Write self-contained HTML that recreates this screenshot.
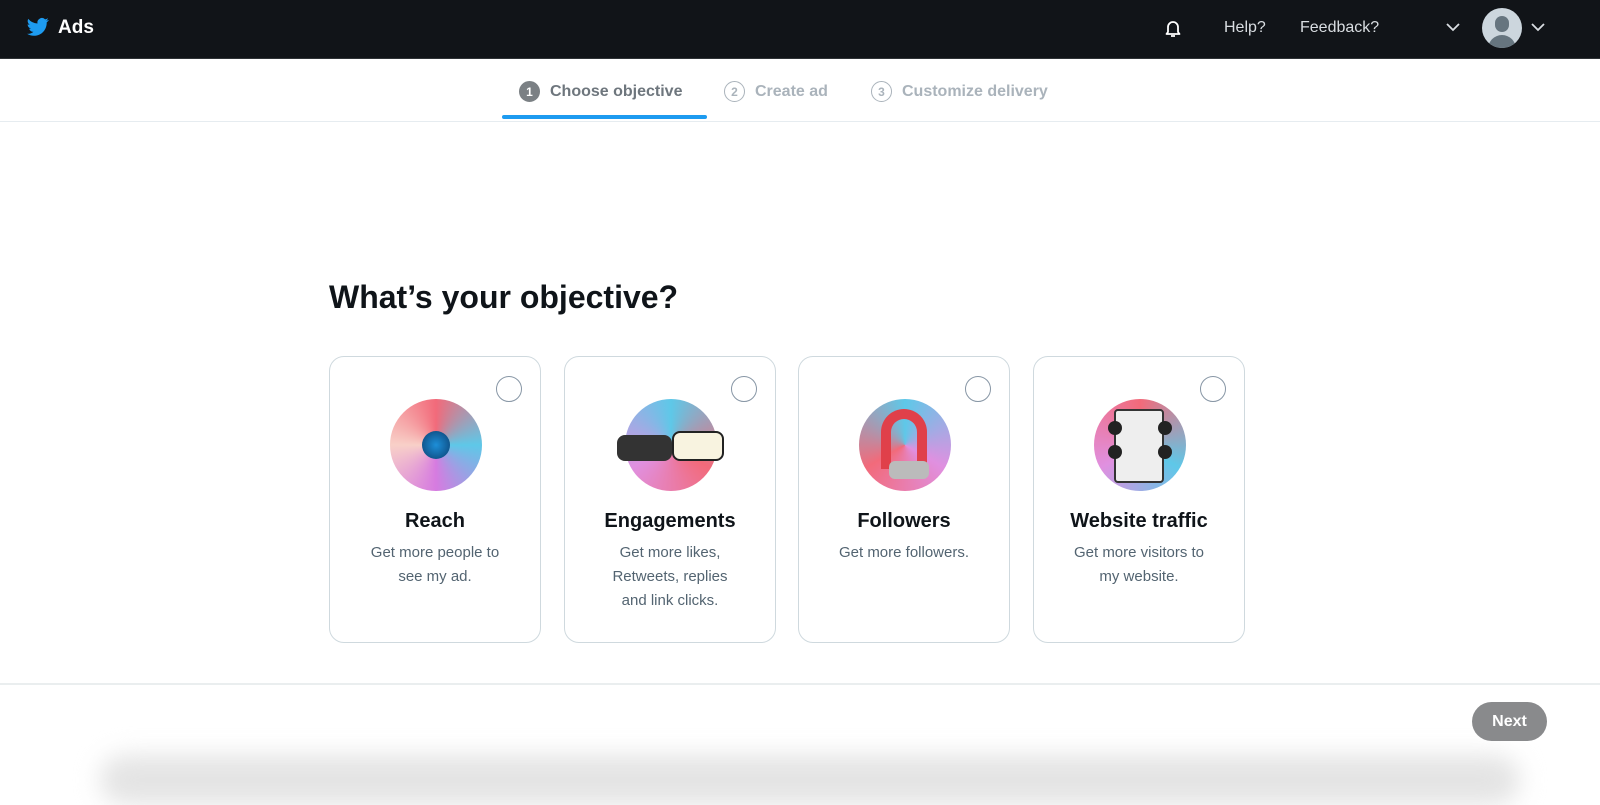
<!DOCTYPE html>
<html><head><style>
*{margin:0;padding:0;box-sizing:border-box}
body{width:1600px;height:772px;overflow:hidden;background:#fff;font-family:"Liberation Sans",sans-serif;position:relative}
.top{position:absolute;left:0;top:0;width:1600px;height:59px;background:#111418;border-bottom:1px solid #2f3336}
.t{position:absolute;color:#d9dde1;font-size:16px;top:19px}
.tabs{position:absolute;top:59px;left:0;width:1600px;height:63px;border-bottom:1px solid #e6ecf0}
.tab{position:absolute;top:22px;font-size:16px;font-weight:bold;color:#aab3bb;display:flex;align-items:center}
.num{width:21px;height:21px;border-radius:50%;border:1.5px solid #aab3bb;font-size:12px;display:flex;align-items:center;justify-content:center;margin-right:10px;color:#aab3bb}
.card{position:absolute;top:356px;width:212px;height:287px;border:1px solid #cfd9de;border-radius:15px;text-align:center}
.radio{position:absolute;right:18px;top:19px;width:26px;height:26px;border-radius:50%;border:1.5px solid #8796a5}
.art{position:absolute;left:60px;top:42px;width:92px;height:92px;border-radius:50%}
.card h3{position:absolute;top:153px;left:0;width:100%;font-size:20px;color:#0f1419}
.card p{position:absolute;top:184px;left:0;right:0;font-size:15px;line-height:24px;color:#536471}
</style></head><body>
<div class="top">
<svg style="position:absolute;left:27px;top:17px" width="22" height="20" viewBox="0 0 24 20"><path fill="#1d9bf0" d="M23.6 2.4c-.9.4-1.8.6-2.8.8 1-.6 1.8-1.6 2.1-2.7-.9.6-2 1-3.1 1.2A4.9 4.9 0 0 0 11.5 6.2 13.9 13.9 0 0 1 1.4 1.1a4.9 4.9 0 0 0 1.5 6.5c-.8 0-1.600-.2-2.2-.6 0 2.4 1.7 4.4 3.9 4.8-.7.2-1.5.2-2.2.1.6 2 2.4 3.4 4.6 3.4A9.8 9.8 0 0 1 0 17.4 13.9 13.9 0 0 0 7.5 19.6c9.1 0 14-7.5 14-14v-.6c1-.7 1.8-1.6 2.4-2.6z"/></svg>
<div style="position:absolute;left:58px;top:17px;color:#fff;font-weight:bold;font-size:19px">Ads</div>
<svg style="position:absolute;left:1164px;top:19px" width="18" height="20" viewBox="0 0 18 20"><path d="M4 13V8a5 5 0 0 1 10 0v5l1.5 2h-13z M7 17h4" fill="none" stroke="#fff" stroke-width="1.8" stroke-linejoin="round"/></svg>
<div class="t" style="left:1224px">Help?</div>
<div class="t" style="left:1300px">Feedback?</div>
<svg style="position:absolute;left:1446px;top:23px" width="14" height="9"><path d="M1 1l6 6 6-6" fill="none" stroke="#d9dde1" stroke-width="1.8"/></svg>
<div style="position:absolute;left:1482px;top:8px;width:40px;height:40px;border-radius:50%;background:#ccd6dd;overflow:hidden"><div style="position:absolute;left:13px;top:8px;width:14px;height:16px;border-radius:7px;background:#66757f"></div><div style="position:absolute;left:6px;top:27px;width:28px;height:20px;border-radius:14px 14px 0 0;background:#66757f"></div></div>
<svg style="position:absolute;left:1531px;top:23px" width="14" height="9"><path d="M1 1l6 6 6-6" fill="none" stroke="#d9dde1" stroke-width="1.8"/></svg>
</div>
<div class="tabs">
<div class="tab" style="left:519px;color:#6e767d"><span class="num" style="background:#7b8084;border-color:#7b8084;color:#fff">1</span>Choose objective</div>
<div class="tab" style="left:724px"><span class="num">2</span>Create ad</div>
<div class="tab" style="left:871px"><span class="num">3</span>Customize delivery</div>
<div style="position:absolute;left:502px;top:56px;width:205px;height:4px;border-radius:2px;background:#1d9bf0"></div>
</div>
<div style="position:absolute;left:329px;top:279px;font-size:32px;font-weight:bold;color:#0f1419">What’s your objective?</div>
<div class="card" style="left:329px"><div class="radio"></div><div class="art" style="background:conic-gradient(#f26a7a,#5ec8e8,#d67be0,#f8d0c8,#f26a7a)"><div style="position:absolute;left:32px;top:32px;width:28px;height:28px;border-radius:50%;background:radial-gradient(#1d8fd8,#0b3e70)"></div></div><h3>Reach</h3><p>Get more people to<br>see my ad.</p></div>
<div class="card" style="left:564px"><div class="radio"></div><div class="art" style="background:conic-gradient(#5ec8e8,#f26a7a,#e090e0,#5ec8e8)"><div style="position:absolute;left:-8px;top:36px;width:55px;height:26px;background:#333;border-radius:8px"></div><div style="position:absolute;left:47px;top:32px;width:52px;height:30px;background:#f8f3e0;border:2px solid #222;border-radius:8px"></div></div><h3>Engagements</h3><p>Get more likes,<br>Retweets, replies<br>and link clicks.</p></div>
<div class="card" style="left:798px"><div class="radio"></div><div class="art" style="background:conic-gradient(#5ec8e8,#e090e0,#f26a7a,#5ec8e8)"><div style="position:absolute;left:22px;top:10px;width:46px;height:60px;border:10px solid #e0404a;border-bottom:none;border-radius:23px 23px 0 0"></div><div style="position:absolute;left:30px;top:62px;width:40px;height:18px;background:#bbb;border-radius:6px"></div></div><h3>Followers</h3><p>Get more followers.</p></div>
<div class="card" style="left:1033px"><div class="radio"></div><div class="art" style="background:conic-gradient(#f26a7a,#5ec8e8,#e090e0,#f26a7a)"><div style="position:absolute;left:20px;top:10px;width:50px;height:74px;background:#eee;border:2px solid #333;border-radius:4px"></div><div style="position:absolute;left:14px;top:22px;width:14px;height:14px;border-radius:50%;background:#222"></div><div style="position:absolute;left:64px;top:22px;width:14px;height:14px;border-radius:50%;background:#222"></div><div style="position:absolute;left:14px;top:46px;width:14px;height:14px;border-radius:50%;background:#222"></div><div style="position:absolute;left:64px;top:46px;width:14px;height:14px;border-radius:50%;background:#222"></div></div><h3>Website traffic</h3><p>Get more visitors to<br>my website.</p></div>
<div style="position:absolute;left:0;top:683px;width:1600px;height:2px;background:#eaeeef"></div>
<div style="position:absolute;left:100px;top:755px;width:1420px;height:50px;border-radius:30px;background:#e4e4e4;filter:blur(12px)"></div>
<div style="position:absolute;left:1472px;top:702px;width:75px;height:39px;border-radius:20px;background:#898a8c;color:#fff;font-weight:bold;font-size:16px;text-align:center;line-height:39px">Next</div>
</body></html>
